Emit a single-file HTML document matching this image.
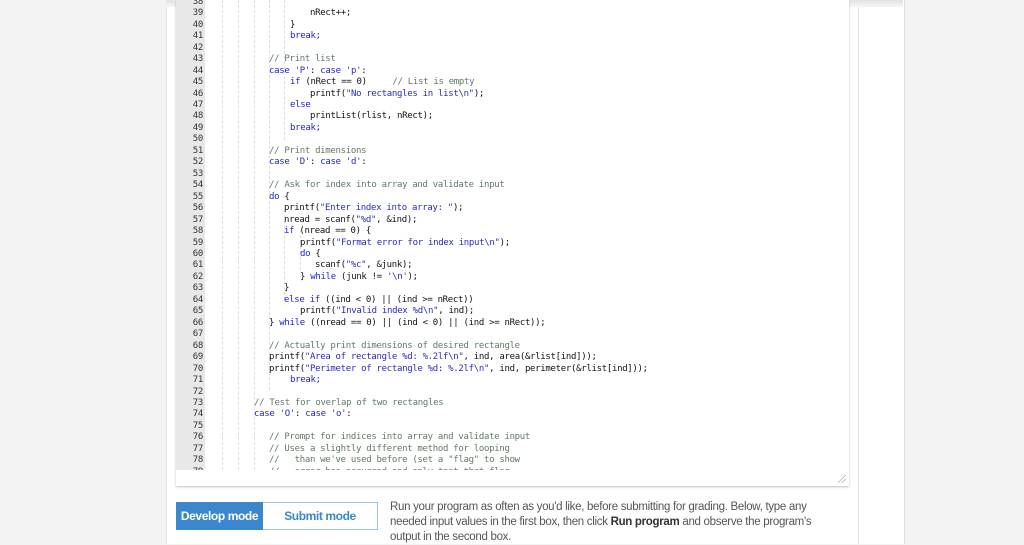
<!DOCTYPE html>
<html><head><meta charset="utf-8"><style>
body{margin:0;width:1024px;height:544px;background:#f3f3f3;position:relative;overflow:hidden;font-family:"Liberation Sans",sans-serif}
.panel{position:absolute;left:166px;top:0;width:737px;height:544px;background:#fff;border-left:1px solid #e6e6e6;border-right:1px solid #e0e0e0}
.vline{position:absolute;left:858px;top:0;width:1px;height:544px;background:#e4e4e4}
.ed{position:absolute;left:176px;top:0;width:673px;height:486px;background:#fff;box-shadow:0 1px 2px rgba(0,0,0,.25);overflow:hidden}
.topsh{position:absolute;left:166px;top:0;width:737px;height:7px;background:linear-gradient(#e2e2e2,#f6f6f6)}
.gut{position:absolute;left:0;top:0;width:29px;height:470px;background:#e8e8e8}
.code{position:absolute;left:0;top:0;width:673px;height:470px;overflow:hidden}
.l{position:absolute;height:11.46px;line-height:11.46px;font-family:"DejaVu Sans Mono",monospace;font-size:9px;letter-spacing:-0.3px;white-space:pre;color:#111}
.n{position:absolute;left:0;width:27px;text-align:right;color:#333}
.k{color:#1e1ed8}.s{color:#2a2ac0}.c{color:#5f7a66}
.g{position:absolute;width:0;border-left:1px dashed #ddd}
.btn1{position:absolute;left:176px;top:502px;width:87px;height:28px;background:#3a87cd;color:#fff;font-weight:bold;font-size:12px;letter-spacing:-0.4px;line-height:28px;text-align:center}
.btn2{position:absolute;left:263px;top:502px;width:114px;height:26px;border:1px solid #9cc0e0;border-left:none;color:#3a87cd;font-weight:bold;font-size:12px;letter-spacing:-0.4px;line-height:26px;text-align:center;background:#fff}
.txt{position:absolute;left:390px;top:500px;width:440px;font-size:11.5px;letter-spacing:-0.3px;line-height:15px;color:#555}
.txt b{color:#333}
.rz{position:absolute;right:3px;bottom:3px;width:8px;height:8px;background:linear-gradient(135deg,transparent 45%,#aaa 45%,#aaa 52%,transparent 52%,transparent 70%,#aaa 70%,#aaa 77%,transparent 77%)}
</style></head><body>
<div class="panel"></div><div class="vline"></div><div class="topsh"></div>
<div class="ed">
<div class="gut"></div>
<div class="code">
<div class="g" style="left:46px;top:0;height:470px"></div>
<div class="g" style="left:62px;top:0;height:470px"></div>
<div class="g" style="left:78px;top:0;height:470px"></div>
<div class="g" style="left:93px;top:0;height:390px"></div>
<div class="g" style="left:108px;top:0;height:140px"></div>
<div class="g" style="left:108px;top:210px;height:90px"></div>
<div class="g" style="left:124px;top:230px;height:40px"></div>
</div>
</div>
<div id="lines" style="position:absolute;left:176px;top:0;width:673px;height:470px;overflow:hidden">
<div class="l" style="top:-3.2px"><span class="n">38</span></div>
<div class="l" style="top:8.3px"><span class="n">39</span><span style="position:absolute;left:134px">nRect++;</span></div>
<div class="l" style="top:19.7px"><span class="n">40</span><span style="position:absolute;left:114px">}</span></div>
<div class="l" style="top:31.2px"><span class="n">41</span><span style="position:absolute;left:114px" class="k">break;</span></div>
<div class="l" style="top:42.6px"><span class="n">42</span></div>
<div class="l" style="top:54.1px"><span class="n">43</span><span style="position:absolute;left:93px" class="c">// Print list</span></div>
<div class="l" style="top:65.6px"><span class="n">44</span><span style="position:absolute;left:93px"><span class="k">case</span> <span class="s">'P'</span>: <span class="k">case</span> <span class="s">'p'</span>:</span></div>
<div class="l" style="top:77.0px"><span class="n">45</span><span style="position:absolute;left:114px"><span class="k">if</span> (nRect == 0)     <span class="c">// List is empty</span></span></div>
<div class="l" style="top:88.5px"><span class="n">46</span><span style="position:absolute;left:134px">printf(<span class="s">"No rectangles in list\n"</span>);</span></div>
<div class="l" style="top:100.0px"><span class="n">47</span><span style="position:absolute;left:114px" class="k">else</span></div>
<div class="l" style="top:111.4px"><span class="n">48</span><span style="position:absolute;left:134px">printList(rlist, nRect);</span></div>
<div class="l" style="top:122.9px"><span class="n">49</span><span style="position:absolute;left:114px" class="k">break;</span></div>
<div class="l" style="top:134.3px"><span class="n">50</span></div>
<div class="l" style="top:145.8px"><span class="n">51</span><span style="position:absolute;left:93px" class="c">// Print dimensions</span></div>
<div class="l" style="top:157.3px"><span class="n">52</span><span style="position:absolute;left:93px"><span class="k">case</span> <span class="s">'D'</span>: <span class="k">case</span> <span class="s">'d'</span>:</span></div>
<div class="l" style="top:168.7px"><span class="n">53</span></div>
<div class="l" style="top:180.2px"><span class="n">54</span><span style="position:absolute;left:93px" class="c">// Ask for index into array and validate input</span></div>
<div class="l" style="top:191.6px"><span class="n">55</span><span style="position:absolute;left:93px"><span class="k">do</span> {</span></div>
<div class="l" style="top:203.1px"><span class="n">56</span><span style="position:absolute;left:108px">printf(<span class="s">"Enter index into array: "</span>);</span></div>
<div class="l" style="top:214.6px"><span class="n">57</span><span style="position:absolute;left:108px">nread = scanf(<span class="s">"%d"</span>, &amp;ind);</span></div>
<div class="l" style="top:226.0px"><span class="n">58</span><span style="position:absolute;left:108px"><span class="k">if</span> (nread == 0) {</span></div>
<div class="l" style="top:237.5px"><span class="n">59</span><span style="position:absolute;left:124px">printf(<span class="s">"Format error for index input\n"</span>);</span></div>
<div class="l" style="top:249.0px"><span class="n">60</span><span style="position:absolute;left:124px"><span class="k">do</span> {</span></div>
<div class="l" style="top:260.4px"><span class="n">61</span><span style="position:absolute;left:139px">scanf(<span class="s">"%c"</span>, &amp;junk);</span></div>
<div class="l" style="top:271.9px"><span class="n">62</span><span style="position:absolute;left:124px">} <span class="k">while</span> (junk != <span class="s">'\n'</span>);</span></div>
<div class="l" style="top:283.3px"><span class="n">63</span><span style="position:absolute;left:108px">}</span></div>
<div class="l" style="top:294.8px"><span class="n">64</span><span style="position:absolute;left:108px"><span class="k">else if</span> ((ind &lt; 0) || (ind &gt;= nRect))</span></div>
<div class="l" style="top:306.3px"><span class="n">65</span><span style="position:absolute;left:124px">printf(<span class="s">"Invalid index %d\n"</span>, ind);</span></div>
<div class="l" style="top:317.7px"><span class="n">66</span><span style="position:absolute;left:93px">} <span class="k">while</span> ((nread == 0) || (ind &lt; 0) || (ind &gt;= nRect));</span></div>
<div class="l" style="top:329.2px"><span class="n">67</span></div>
<div class="l" style="top:340.6px"><span class="n">68</span><span style="position:absolute;left:93px" class="c">// Actually print dimensions of desired rectangle</span></div>
<div class="l" style="top:352.1px"><span class="n">69</span><span style="position:absolute;left:93px">printf(<span class="s">"Area of rectangle %d: %.2lf\n"</span>, ind, area(&amp;rlist[ind]));</span></div>
<div class="l" style="top:363.6px"><span class="n">70</span><span style="position:absolute;left:93px">printf(<span class="s">"Perimeter of rectangle %d: %.2lf\n"</span>, ind, perimeter(&amp;rlist[ind]));</span></div>
<div class="l" style="top:375.0px"><span class="n">71</span><span style="position:absolute;left:114px" class="k">break;</span></div>
<div class="l" style="top:386.5px"><span class="n">72</span></div>
<div class="l" style="top:398.0px"><span class="n">73</span><span style="position:absolute;left:78px" class="c">// Test for overlap of two rectangles</span></div>
<div class="l" style="top:409.4px"><span class="n">74</span><span style="position:absolute;left:78px"><span class="k">case</span> <span class="s">'O'</span>: <span class="k">case</span> <span class="s">'o'</span>:</span></div>
<div class="l" style="top:420.9px"><span class="n">75</span></div>
<div class="l" style="top:432.3px"><span class="n">76</span><span style="position:absolute;left:93px" class="c">// Prompt for indices into array and validate input</span></div>
<div class="l" style="top:443.8px"><span class="n">77</span><span style="position:absolute;left:93px" class="c">// Uses a slightly different method for looping</span></div>
<div class="l" style="top:455.3px"><span class="n">78</span><span style="position:absolute;left:93px" class="c">//   than we've used before (set a "flag" to show</span></div>
<div class="l" style="top:466.7px"><span class="n">79</span><span style="position:absolute;left:93px" class="c">//   error has occurred and only test that flag</span></div>
</div>
<div style="position:absolute;left:176px;top:470px;width:673px;height:16px;background:#fff"><div class="rz"></div></div>
<div class="btn1">Develop mode</div>
<div class="btn2">Submit mode</div>
<div class="txt">Run your program as often as you'd like, before submitting for grading. Below, type any needed input values in the first box, then click <b>Run program</b> and observe the program's output in the second box.</div>
</body></html>
